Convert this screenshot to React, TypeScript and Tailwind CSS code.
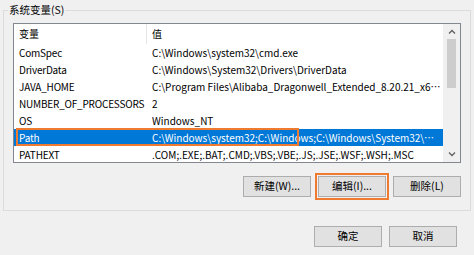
// 系统变量对话框：变量列表、编辑按钮与底部确定/取消。
const ROWS: { name: string; value: string; selected?: boolean }[] = [
  { name: "ComSpec", value: "C:\\Windows\\system32\\cmd.exe" },
  { name: "DriverData", value: "C:\\Windows\\System32\\Drivers\\DriverData" },
  { name: "JAVA_HOME", value: "C:\\Program Files\\Alibaba_Dragonwell_Extended_8.20.21_x64_..." },
  { name: "NUMBER_OF_PROCESSORS", value: "2" },
  { name: "OS", value: "Windows_NT" },
  { name: "Path", value: "C:\\Windows\\system32;C:\\Windows;C:\\Windows\\System32\\Wb...", selected: true },
  { name: "PATHEXT", value: ".COM;.EXE;.BAT;.CMD;.VBS;.VBE;.JS;.JSE;.WSF;.WSH;.MSC" },
];

function Chevron({ up }: { up?: boolean }) {
  return (
    <svg width="8" height="5" viewBox="0 0 8 5" className={up ? "" : "rotate-180"}>
      <path d="M1 4.5 L4 1.5 L7 4.5" fill="none" stroke="#606060" strokeWidth="1.3" />
    </svg>
  );
}

function Button({ label, className = "" }: { label: string; className?: string }) {
  return (
    <div
      className={`flex h-[21px] w-[68px] items-center justify-center border border-[#adadad] bg-[#e1e1e1] ${className}`}
    >
      {label}
    </div>
  );
}

export default function App() {
  return (
    <div className="h-[255px] w-[474px] overflow-hidden bg-[#f0f0f0] font-['Noto_Sans_CJK_SC',sans-serif] text-[10.5px] leading-none text-black">
      <fieldset className="mx-[3px] mt-[2px] w-[468px] min-w-0 border border-[#dcdcdc] px-[9px] pt-[5px] pb-[13px]">
        <legend className="-ml-[5px] px-[1px] leading-[16px]">系统变量(S)</legend>

        {/* 列表 */}
        <div className="flex h-[140px] min-w-0 border border-[#828790] bg-white text-[10px]">
          <div className="min-w-0 flex-1 overflow-hidden">
            <div className="flex h-[20px] items-center leading-[20px]">
              <div className="h-full w-[133px] border-r border-[#e5e5e5] pl-[5px]">变量</div>
              <div className="pl-[5px]">值</div>
            </div>
            {ROWS.map((r) => (
              <div
                key={r.name}
                className={`relative flex h-[17px] whitespace-nowrap leading-[17px] ${
                  r.selected ? "bg-[#0078d7] text-white" : ""
                }`}
              >
                <div className="w-[133px] shrink-0 truncate pl-[5px] tracking-[-0.2px]">{r.name}</div>
                <div className="min-w-0 flex-1 truncate pl-[5px] pr-[2px]">{r.value}</div>
                {r.selected && (
                  <span className="absolute top-[-1px] left-[2px] h-[18px] w-[283px] border-2 border-[#ee7b30]" />
                )}
              </div>
            ))}
          </div>

          {/* 滚动条 */}
          <div className="flex w-[17px] shrink-0 flex-col items-center bg-[#f0f0f0]">
            <div className="flex h-[15px] items-center">
              <Chevron up />
            </div>
            <div className="h-[49px] w-[9px] bg-[#cdcdcd]" />
            <div className="flex-1" />
            <div className="flex h-[15px] items-center">
              <Chevron />
            </div>
          </div>
        </div>

        <div className="mt-[13px] flex justify-end gap-[7px]">
          <Button label="新建(W)..." />
          <Button label="编辑(I)..." className="outline-2 outline-offset-[1px] outline-[#ee7b30]" />
          <Button label="删除(L)" />
        </div>
      </fieldset>

      <div className="mt-[15px] flex justify-end gap-[7px] pr-[17px]">
        <Button label="确定" className="border-[#0078d7]" />
        <Button label="取消" />
      </div>
    </div>
  );
}
